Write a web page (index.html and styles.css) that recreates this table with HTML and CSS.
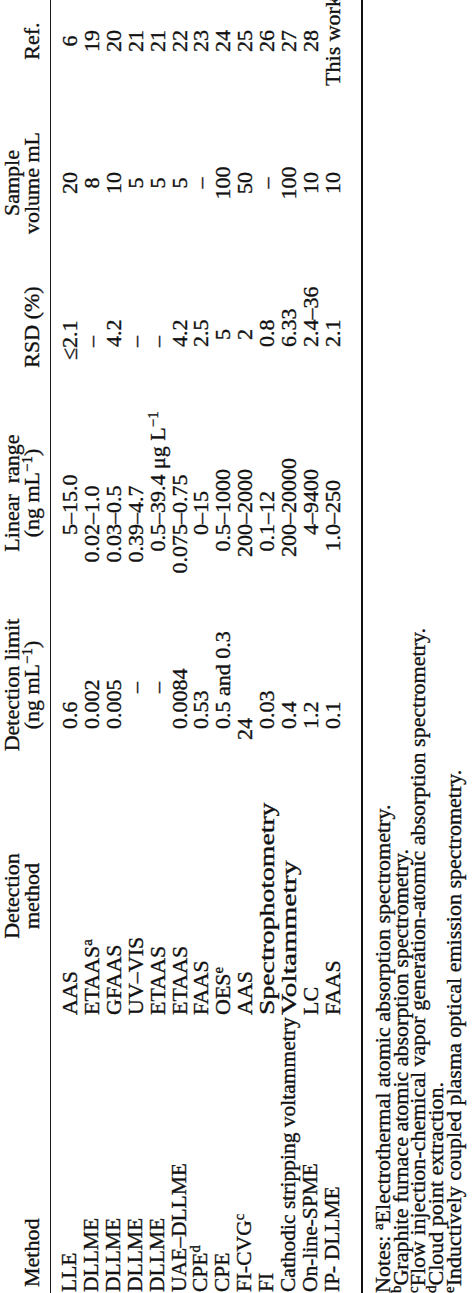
FILE: index.html
```html
<!DOCTYPE html>
<html lang="en">
<head>
<meta charset="utf-8">
<title>Comparison of methods</title>
<link rel="stylesheet" href="styles.css">
</head>
<body>
<div class="page">
  <div class="table">
    <div class="thead grid">
      <div class="th left">Method</div>
      <div class="th">Detection<br>method</div>
      <div class="th">Detection limit<br>(ng mL<sup>−1</sup>)</div>
      <div class="th">Linear&nbsp; range<br>(ng mL<sup>−1</sup>)</div>
      <div class="th">RSD (%)</div>
      <div class="th">Sample<br>volume mL</div>
      <div class="th">Ref.</div>
    </div>
    <div class="tbody">
      <div class="row grid"><div class="m">LLE</div><div class="dm">AAS</div><div class="dl"><span class="ip">0</span><span class="fp">.6</span></div><div class="lr"><span class="lp">5</span><span class="rp">–15.0</span></div><div class="rsd"><span class="le">≤</span>2.1</div><div class="sv">20</div><div class="ref">6</div></div>
      <div class="row grid"><div class="m">DLLME</div><div class="dm">ETAAS<sup>a</sup></div><div class="dl"><span class="ip">0</span><span class="fp">.002</span></div><div class="lr"><span class="lp">0.02</span><span class="rp">–1.0</span></div><div class="rsd">–</div><div class="sv">8</div><div class="ref">19</div></div>
      <div class="row grid"><div class="m">DLLME</div><div class="dm">GFAAS</div><div class="dl"><span class="ip">0</span><span class="fp">.005</span></div><div class="lr"><span class="lp">0.03</span><span class="rp">–0.5</span></div><div class="rsd">4.2</div><div class="sv">10</div><div class="ref">20</div></div>
      <div class="row grid"><div class="m">DLLME</div><div class="dm">UV–VIS</div><div class="dl"><span class="ip"></span><span class="fp"><span class="dash">–</span></span></div><div class="lr"><span class="lp">0.39</span><span class="rp">–4.7</span></div><div class="rsd">–</div><div class="sv">5</div><div class="ref">21</div></div>
      <div class="row grid"><div class="m">DLLME</div><div class="dm">ETAAS</div><div class="dl"><span class="ip"></span><span class="fp"><span class="dash">–</span></span></div><div class="lr"><span class="lp">0.5</span><span class="rp">–39.4 μg L<sup>−1</sup></span></div><div class="rsd">–</div><div class="sv">5</div><div class="ref">21</div></div>
      <div class="row grid"><div class="m">UAE–DLLME</div><div class="dm">ETAAS</div><div class="dl"><span class="ip">0</span><span class="fp">.0084</span></div><div class="lr"><span class="lp">0.075</span><span class="rp">–0.75</span></div><div class="rsd">4.2</div><div class="sv">5</div><div class="ref">22</div></div>
      <div class="row grid"><div class="m">CPE<sup>d</sup></div><div class="dm">FAAS</div><div class="dl"><span class="ip">0</span><span class="fp">.53</span></div><div class="lr"><span class="lp">0</span><span class="rp">–15</span></div><div class="rsd">2.5</div><div class="sv">–</div><div class="ref">23</div></div>
      <div class="row grid"><div class="m">CPE</div><div class="dm">OES<sup>e</sup></div><div class="dl"><span class="ip">0</span><span class="fp">.5 and 0.3</span></div><div class="lr"><span class="lp">0.5</span><span class="rp">–1000</span></div><div class="rsd"><span class="int">5</span></div><div class="sv">100</div><div class="ref">24</div></div>
      <div class="row grid"><div class="m">FI-CVG<sup>c</sup></div><div class="dm">AAS</div><div class="dl"><span class="ip">24</span><span class="fp"></span></div><div class="lr"><span class="lp">200</span><span class="rp">–2000</span></div><div class="rsd"><span class="int">2</span></div><div class="sv">50</div><div class="ref">25</div></div>
      <div class="row grid"><div class="m">FI</div><div class="dm"><span class="wide spectro">Spectrophotometry</span></div><div class="dl"><span class="ip">0</span><span class="fp">.03</span></div><div class="lr"><span class="lp">0.1</span><span class="rp">–12</span></div><div class="rsd">0.8</div><div class="sv">–</div><div class="ref">26</div></div>
      <div class="row grid"><div class="m">Cathodic stripping voltammetry</div><div class="dm"><span class="wide volt">Voltammetry</span></div><div class="dl"><span class="ip">0</span><span class="fp">.4</span></div><div class="lr"><span class="lp">200</span><span class="rp">–20000</span></div><div class="rsd">6.33</div><div class="sv">100</div><div class="ref">27</div></div>
      <div class="row grid"><div class="m">On-line-SPME</div><div class="dm">LC</div><div class="dl"><span class="ip">1</span><span class="fp">.2</span></div><div class="lr"><span class="lp">4</span><span class="rp">–9400</span></div><div class="rsd">2.4–36</div><div class="sv">10</div><div class="ref">28</div></div>
      <div class="row grid"><div class="m">IP- DLLME</div><div class="dm">FAAS</div><div class="dl"><span class="ip">0</span><span class="fp">.1</span></div><div class="lr"><span class="lp">1.0</span><span class="rp">–250</span></div><div class="rsd">2.1</div><div class="sv">10</div><div class="ref">This work</div></div>
    </div>
  </div>
  <div class="notes">
    <p>Notes: <sup>a</sup>Electrothermal atomic absorption spectrometry.</p>
    <p><sup>b</sup>Graphite furnace atomic absorption spectrometry.</p>
    <p><sup>c</sup>Flow injection-chemical vapor generation-atomic absorption spectrometry.</p>
    <p><sup>d</sup>Cloud point extraction.</p>
    <p><sup>e</sup>Inductively coupled plasma optical emission spectrometry.</p>
  </div>
</div>
</body>
</html>
```
FILE: styles.css
```css
html, body {
  margin: 0;
  padding: 0;
  background: #ffffff;
  overflow: hidden;
}

body {
  width: 474px;
  height: 1293px;
  font-family: "Liberation Serif", "Times New Roman", serif;
  font-size: 22px;
  color: #111111;
}

.page {
  width: 1293px;
  height: 474px;
  overflow: hidden;
  transform-origin: 0 0;
  transform: translateY(1293px) rotate(-90deg);
  background: #ffffff;
  -webkit-text-stroke: 0.35px #111111;
}

.grid {
  display: grid;
  grid-template-columns: 278px 238px 184px 200px 132px 156px 128px;
  width: 1316px;
}

sup {
  font-size: 0.68em;
  line-height: 0;
  vertical-align: 0.5em;
}

.thead {
  line-height: 20px;
  align-items: end;
  padding-top: 2px;
  padding-bottom: 8px;
  border-bottom: 1.5px solid #1c1c1c;
  width: 1316px;
}

.th {
  text-align: center;
  white-space: nowrap;
}

.th.left {
  text-align: left;
  padding-left: 6px;
}

.tbody {
  padding-top: 8px;
  padding-bottom: 17px;
  border-bottom: 2.5px solid #111;
  width: 1316px;
}

.row {
  line-height: 21.9px;
  white-space: nowrap;
}

.m {
  font-size: 21.5px;
  padding-left: 1px;
}

.dm {
  text-align: left;
}

.wide {
  display: inline-block;
  transform-origin: 0 50%;
}

.spectro {
  transform: scaleX(1.26);
}

.volt {
  transform: scaleX(1.35);
}

.dl {
  display: grid;
  grid-template-columns: 59px 1fr;
}

.ip {
  text-align: right;
}

.fp {
  text-align: left;
}

.dash {
  margin-left: 25px;
}

.lr {
  display: grid;
  grid-template-columns: 69px 1fr;
}

.lp {
  text-align: right;
}

.rp {
  text-align: left;
}

.rsd {
  padding-left: 46px;
}

.le {
  margin-left: -13px;
}

.int {
  margin-left: 7px;
}

.sv,
.ref {
  text-align: center;
}

.notes {
  padding-top: 11px;
  line-height: 17.8px;
  white-space: nowrap;
}

.notes p {
  margin: 0;
}
```
